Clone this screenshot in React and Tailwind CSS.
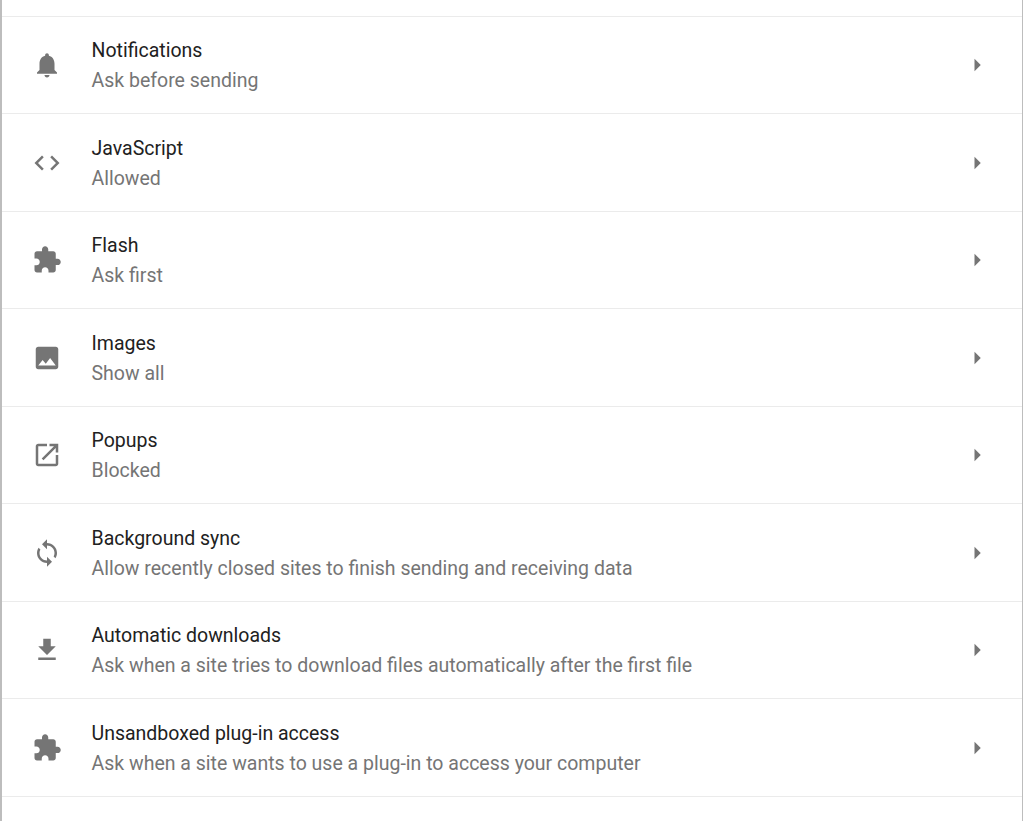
const icons = {
  bell: "M12 22c1.1 0 2-.9 2-2h-4c0 1.1.89 2 2 2zm6-6v-5c0-3.07-1.64-5.64-4.5-6.32V4c0-.83-.67-1.5-1.5-1.5s-1.5.67-1.5 1.5v.68C7.63 5.36 6 7.92 6 11v5l-2 2v1h16v-1l-2-2z",
  code: "M9.4 16.6L4.8 12l4.6-4.6L8 6l-6 6 6 6 1.4-1.4zm5.2 0l4.6-4.6-4.6-4.6L16 6l6 6-6 6-1.4-1.4z",
  extension:
    "M20.5 11H19V7c0-1.1-.9-2-2-2h-4V3.5C13 2.12 11.88 1 10.5 1S8 2.12 8 3.5V5H4c-1.1 0-1.99.9-1.99 2v3.8H3.5c1.49 0 2.7 1.21 2.7 2.7s-1.21 2.7-2.7 2.7H2V20c0 1.1.9 2 2 2h3.8v-1.5c0-1.49 1.21-2.7 2.7-2.7 1.49 0 2.7 1.21 2.7 2.7V22H17c1.1 0 2-.9 2-2v-4h1.5c1.38 0 2.5-1.12 2.5-2.5S21.88 11 20.5 11z",
  image:
    "M21 19V5c0-1.1-.9-2-2-2H5c-1.1 0-2 .9-2 2v14c0 1.1.9 2 2 2h14c1.1 0 2-.9 2-2zM8.5 13.5l2.5 3.01L14.5 12l4.5 6H5l3.5-4.5z",
  openInNew:
    "M19 19H5V5h7V3H5c-1.11 0-2 .9-2 2v14c0 1.1.89 2 2 2h14c1.1 0 2-.9 2-2v-7h-2v7zM14 3v2h3.59l-9.83 9.83 1.41 1.41L19 6.41V10h2V3h-7z",
  sync: "M12 4V1L8 5l4 4V6c3.31 0 6 2.69 6 6 0 1.01-.25 1.97-.7 2.8l1.46 1.46C19.54 15.03 20 13.57 20 12c0-4.42-3.58-8-8-8zm0 14c-3.31 0-6-2.69-6-6 0-1.01.25-1.97.7-2.8L5.24 7.74C4.46 8.97 4 10.43 4 12c0 4.42 3.58 8 8 8v3l4-4-4-4v3z",
  download: "M19 9h-4V3H9v6H5l7 7 7-7zM5 18v2h14v-2H5z",
  arrowRight: "M10 7l5 5-5 5z",
};

const settings = [
  { icon: "bell", title: "Notifications", detail: "Ask before sending" },
  { icon: "code", title: "JavaScript", detail: "Allowed" },
  { icon: "extension", title: "Flash", detail: "Ask first" },
  { icon: "image", title: "Images", detail: "Show all" },
  { icon: "openInNew", title: "Popups", detail: "Blocked" },
  {
    icon: "sync",
    title: "Background sync",
    detail: "Allow recently closed sites to finish sending and receiving data",
  },
  {
    icon: "download",
    title: "Automatic downloads",
    detail: "Ask when a site tries to download files automatically after the first file",
  },
  {
    icon: "extension",
    title: "Unsandboxed plug-in access",
    detail: "Ask when a site wants to use a plug-in to access your computer",
  },
];

function Icon({ name }) {
  return (
    <svg viewBox="0 0 24 24" className="size-[30px] shrink-0 fill-[#757575]">
      <path d={icons[name]} />
    </svg>
  );
}

export default function App() {
  return (
    <div className="h-screen overflow-hidden bg-white border-l-2 border-r border-[#bdbdbd] pt-[15.75px] font-[Roboto,sans-serif]">
      {settings.map((item) => (
        <button
          key={item.title}
          className="flex h-[97.5px] w-full items-center border-t border-[#ebebeb] px-[30px] text-left"
        >
          <Icon name={item.icon} />
          <span className="ml-[29.5px] flex-1 pt-[2.5px] text-[19.5px] leading-[30px]">
            <span className="block text-[#212121]">{item.title}</span>
            <span className="block text-[#757575]">{item.detail}</span>
          </span>
          <Icon name="arrowRight" />
        </button>
      ))}
      <div className="border-t border-[#ebebeb]" />
    </div>
  );
}
